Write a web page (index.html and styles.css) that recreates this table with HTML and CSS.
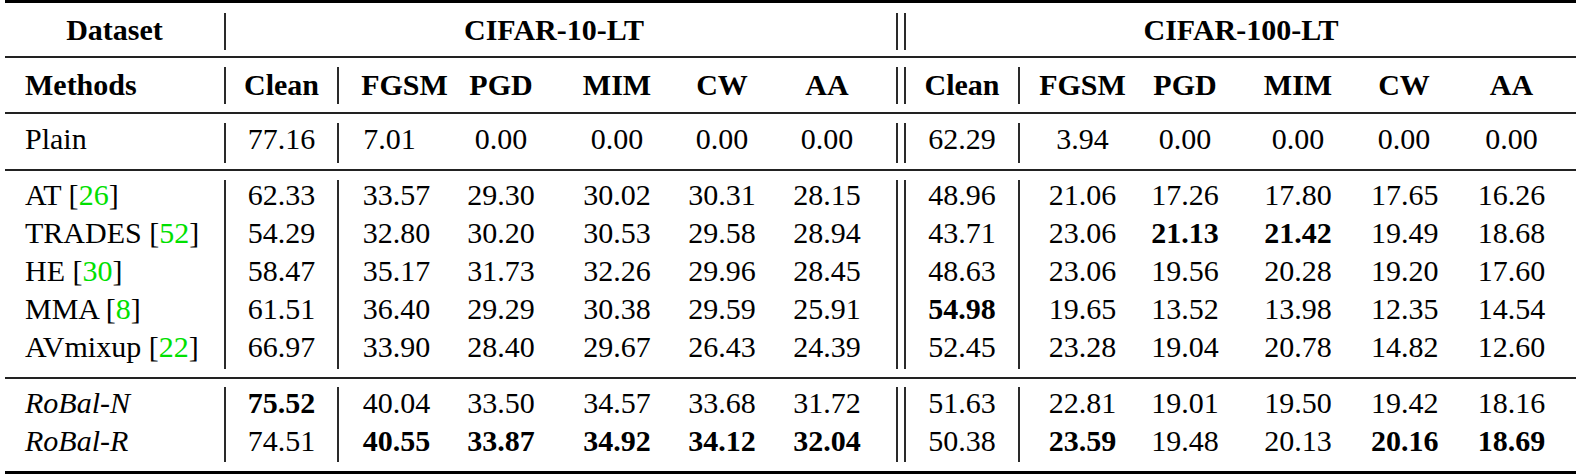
FILE: index.html
```html
<!DOCTYPE html>
<html>
<head>
<meta charset="utf-8">
<link rel="stylesheet" href="styles.css">
</head>
<body>
<div class="table">
  <div class="sec s-h1">
    <div class="bar b1"></div><div class="dbl"></div>
    <div class="cell ctr b">Dataset</div>
    <div class="cell ctr b span7 c10">CIFAR-10-LT</div>
    <div class="cell ctr b span7">CIFAR-100-LT</div>
  </div>
  <div class="sec s-h2">
    <div class="bar b1"></div><div class="bar b2"></div><div class="dbl"></div><div class="bar b3"></div>
    <div class="cell name b">Methods</div>
    <div class="cell ctr b">Clean</div>
    <div class="cell ctr b fg">FGSM</div>
    <div class="cell ctr b">PGD</div>
    <div class="cell ctr b">MIM</div>
    <div class="cell ctr b">CW</div>
    <div class="cell ctr b">AA</div>
    <div class="cell ctr b">Clean</div>
    <div class="cell ctr b">FGSM</div>
    <div class="cell ctr b">PGD</div>
    <div class="cell ctr b">MIM</div>
    <div class="cell ctr b">CW</div>
    <div class="cell ctr b last">AA</div>
  </div>
  <div class="sec s-plain">
    <div class="bar b1"></div><div class="bar b2"></div><div class="dbl"></div><div class="bar b3"></div>
    <div class="cell name">Plain</div>
    <div class="cell ctr">77.16</div>
    <div class="cell ctr lft">7.01</div>
    <div class="cell ctr">0.00</div>
    <div class="cell ctr">0.00</div>
    <div class="cell ctr">0.00</div>
    <div class="cell ctr">0.00</div>
    <div class="cell ctr">62.29</div>
    <div class="cell ctr">3.94</div>
    <div class="cell ctr">0.00</div>
    <div class="cell ctr">0.00</div>
    <div class="cell ctr">0.00</div>
    <div class="cell ctr last">0.00</div>
  </div>
  <div class="sec s-g1">
    <div class="bar b1"></div><div class="bar b2"></div><div class="dbl"></div><div class="bar b3"></div>

    <div class="cell name">AT [<span class="cite">26</span>]</div>
    <div class="cell ctr">62.33</div>
    <div class="cell ctr">33.57</div>
    <div class="cell ctr">29.30</div>
    <div class="cell ctr">30.02</div>
    <div class="cell ctr">30.31</div>
    <div class="cell ctr">28.15</div>
    <div class="cell ctr">48.96</div>
    <div class="cell ctr">21.06</div>
    <div class="cell ctr">17.26</div>
    <div class="cell ctr">17.80</div>
    <div class="cell ctr">17.65</div>
    <div class="cell ctr last">16.26</div>

    <div class="cell name">TRADES [<span class="cite">52</span>]</div>
    <div class="cell ctr">54.29</div>
    <div class="cell ctr">32.80</div>
    <div class="cell ctr">30.20</div>
    <div class="cell ctr">30.53</div>
    <div class="cell ctr">29.58</div>
    <div class="cell ctr">28.94</div>
    <div class="cell ctr">43.71</div>
    <div class="cell ctr">23.06</div>
    <div class="cell ctr b">21.13</div>
    <div class="cell ctr b">21.42</div>
    <div class="cell ctr">19.49</div>
    <div class="cell ctr last">18.68</div>

    <div class="cell name">HE [<span class="cite">30</span>]</div>
    <div class="cell ctr">58.47</div>
    <div class="cell ctr">35.17</div>
    <div class="cell ctr">31.73</div>
    <div class="cell ctr">32.26</div>
    <div class="cell ctr">29.96</div>
    <div class="cell ctr">28.45</div>
    <div class="cell ctr">48.63</div>
    <div class="cell ctr">23.06</div>
    <div class="cell ctr">19.56</div>
    <div class="cell ctr">20.28</div>
    <div class="cell ctr">19.20</div>
    <div class="cell ctr last">17.60</div>

    <div class="cell name">MMA [<span class="cite">8</span>]</div>
    <div class="cell ctr">61.51</div>
    <div class="cell ctr">36.40</div>
    <div class="cell ctr">29.29</div>
    <div class="cell ctr">30.38</div>
    <div class="cell ctr">29.59</div>
    <div class="cell ctr">25.91</div>
    <div class="cell ctr b">54.98</div>
    <div class="cell ctr">19.65</div>
    <div class="cell ctr">13.52</div>
    <div class="cell ctr">13.98</div>
    <div class="cell ctr">12.35</div>
    <div class="cell ctr last">14.54</div>

    <div class="cell name">AVmixup [<span class="cite">22</span>]</div>
    <div class="cell ctr">66.97</div>
    <div class="cell ctr">33.90</div>
    <div class="cell ctr">28.40</div>
    <div class="cell ctr">29.67</div>
    <div class="cell ctr">26.43</div>
    <div class="cell ctr">24.39</div>
    <div class="cell ctr">52.45</div>
    <div class="cell ctr">23.28</div>
    <div class="cell ctr">19.04</div>
    <div class="cell ctr">20.78</div>
    <div class="cell ctr">14.82</div>
    <div class="cell ctr last">12.60</div>
  </div>
  <div class="sec s-g2">
    <div class="bar b1"></div><div class="bar b2"></div><div class="dbl"></div><div class="bar b3"></div>

    <div class="cell name i">RoBal-N</div>
    <div class="cell ctr b">75.52</div>
    <div class="cell ctr">40.04</div>
    <div class="cell ctr">33.50</div>
    <div class="cell ctr">34.57</div>
    <div class="cell ctr">33.68</div>
    <div class="cell ctr">31.72</div>
    <div class="cell ctr">51.63</div>
    <div class="cell ctr">22.81</div>
    <div class="cell ctr">19.01</div>
    <div class="cell ctr">19.50</div>
    <div class="cell ctr">19.42</div>
    <div class="cell ctr last">18.16</div>

    <div class="cell name i">RoBal-R</div>
    <div class="cell ctr">74.51</div>
    <div class="cell ctr b">40.55</div>
    <div class="cell ctr b">33.87</div>
    <div class="cell ctr b">34.92</div>
    <div class="cell ctr b">34.12</div>
    <div class="cell ctr b">32.04</div>
    <div class="cell ctr">50.38</div>
    <div class="cell ctr b">23.59</div>
    <div class="cell ctr">19.48</div>
    <div class="cell ctr">20.13</div>
    <div class="cell ctr b">20.16</div>
    <div class="cell ctr b last">18.69</div>
  </div>
</div>
</body>
</html>
```
FILE: styles.css
```css
html, body {
  margin: 0;
  padding: 0;
  background: #ffffff;
}

body {
  font-family: "Liberation Serif", "Times New Roman", serif;
  font-size: 30px;
  color: #000;
}

.table {
  margin-left: 5px;
  width: 1571px;
  border-top: 3px solid #000;
  border-bottom: 3px solid #000;
}

.sec {
  display: grid;
  grid-template-columns: 219px 2px 111px 2px 115px 94px 138px 72px 138px 10px 112px 2px 125px 80px 146px 66px 139px;
  border-bottom: 2px solid #222;
}

.sec:last-child {
  border-bottom: none;
}

.sec::before {
  content: "";
  grid-row: 1;
  grid-column: 1 / -1;
}

.sec::after {
  content: "";
  grid-row: -2 / -1;
  grid-column: 1 / -1;
}

.s-h1 { grid-template-rows: 8px 38px 7px; }
.s-h2 { grid-template-rows: 8px 38px 8px; }
.s-plain { grid-template-rows: 6px 38px 11px; }
.s-g1 { grid-template-rows: 5px repeat(5, 38px) 11px; }
.s-g2 { grid-template-rows: 5px repeat(2, 38px) 11px; }

.bar,
.dbl {
  grid-row: 1 / -1;
  margin: 9px 0 8px;
}

.bar {
  background: #2a2a2a;
}

.dbl {
  grid-column: 10;
  border-left: 2px solid #2a2a2a;
  border-right: 2px solid #2a2a2a;
}

.b1 { grid-column: 2; }
.b2 { grid-column: 4; }
.b3 { grid-column: 12; }

.s-h1 .bar, .s-h1 .dbl { margin: 10px 0 6px; }
.s-plain .bar, .s-plain .dbl { margin: 9px 0 6px; }
.s-g2 .bar, .s-g2 .dbl { margin: 8px 0 9px; }

.cell {
  line-height: 38px;
  white-space: nowrap;
}

.ctr { text-align: center; }

.name {
  padding-left: 20px;
}

.span7 { grid-column-end: span 7; }

.c10 { padding-right: 14px; }

.last { padding-left: 10px; }

.fg { padding-left: 16px; }

.lft { padding-right: 14px; }

.b { font-weight: bold; }

.i { font-style: italic; }

.cite { color: #00e000; }
```
